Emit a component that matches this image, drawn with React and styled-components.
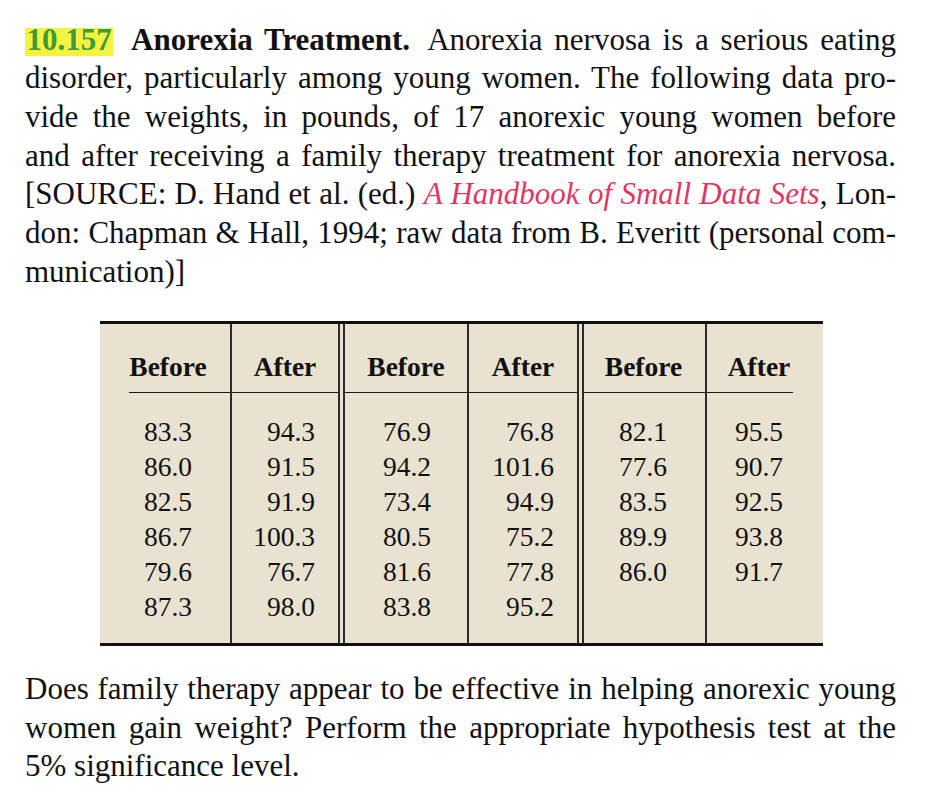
import React from "react";
import styled, { createGlobalStyle } from "styled-components";

const Global = createGlobalStyle`
  html, body { margin: 0; padding: 0; background: #ffffff; }
  body { font-family: "Liberation Serif", "Times New Roman", serif; color: #111; }
`;

const Page = styled.div`
  box-sizing: border-box;
  width: 934px;
  padding: 20.5px 38px 30px 25px;
`;

const Paragraph = styled.div`
  font-size: 31px;
  line-height: 38.7px;
  margin-top: ${(p) => p.$top || 0}px;
`;

const Line = styled.div`
  text-align: justify;
  text-align-last: ${(p) => (p.$last ? "left" : "justify")};
`;

const Number = styled.span`
  font-weight: bold;
  color: #3e9a3c;
  padding: 0 1.5px;
  margin-right: 6px;
  background: linear-gradient(to bottom, transparent 5.5px, #f4f340 5.5px, #f4f340 calc(100% - 0.5px), transparent calc(100% - 0.5px));
`;

const Title = styled.span`
  font-weight: bold;
  margin-right: 7px;
`;

const BookTitle = styled.i`
  color: #e1375f;
`;

const Table = styled.div`
  display: flex;
  width: 723px;
  margin: 29.5px 0 0 75px;
  background: #e9e2d0;
  border-top: 3px solid #111;
  border-bottom: 3px solid #111;
  font-size: 27.5px;
`;

const Column = styled.div`
  box-sizing: border-box;
  width: ${(p) => p.$w}px;
  display: flex;
  flex-direction: column;
  border-right: ${(p) =>
    p.$border === "double"
      ? "7px double #2b2b2b"
      : p.$border === "single"
      ? "2px solid #2b2b2b"
      : "none"};
`;

const HeadCell = styled.div`
  position: relative;
  box-sizing: border-box;
  height: 70px;
  padding: 26px ${(p) => p.$pr || 0}px 0 ${(p) => p.$pl || 0}px;
  line-height: 34px;
  font-weight: bold;
  text-align: center;
  &::after {
    content: "";
    position: absolute;
    left: ${(p) => p.$ls || 0}px;
    right: ${(p) => p.$le || 0}px;
    bottom: 0.5px;
    height: 1.5px;
    background: #1a1a1a;
  }
`;

const Body = styled.div`
  padding: 20px 0 19px;
  flex: 1;
`;

const Cell = styled.div`
  height: 35px;
  line-height: 35px;
  text-align: right;
  padding-right: ${(p) => p.$pr}px;
`;

const columns = [
  { head: "Before", w: 132, border: "single", pr: 38, hpl: 6, hpr: 0, ls: 29, le: 0,
    values: ["83.3", "86.0", "82.5", "86.7", "79.6", "87.3"] },
  { head: "After", w: 113, border: "double", pr: 23, hpl: 0, hpr: 0, ls: 0, le: 0,
    values: ["94.3", "91.5", "91.9", "100.3", "76.7", "98.0"] },
  { head: "Before", w: 124, border: "single", pr: 36, hpl: 0, hpr: 0, ls: 0, le: 0,
    values: ["76.9", "94.2", "73.4", "80.5", "81.6", "83.8"] },
  { head: "After", w: 115, border: "double", pr: 23, hpl: 0, hpr: 0, ls: 0, le: 0,
    values: ["76.8", "101.6", "94.9", "75.2", "77.8", "95.2"] },
  { head: "Before", w: 123, border: "single", pr: 38, hpl: 0, hpr: 2, ls: 0, le: 0,
    values: ["82.1", "77.6", "83.5", "89.9", "86.0", ""] },
  { head: "After", w: 116, border: "none", pr: 40, hpl: 0, hpr: 12, ls: 0, le: 30,
    values: ["95.5", "90.7", "92.5", "93.8", "91.7", ""] },
];

export default function App() {
  return (
    <Page>
      <Global />
      <Paragraph>
        <Line>
          <Number>10.157</Number> <Title>Anorexia Treatment.</Title> Anorexia nervosa is a serious eating
        </Line>
        <Line>disorder, particularly among young women. The following data pro-</Line>
        <Line>vide the weights, in pounds, of 17 anorexic young women before</Line>
        <Line>and after receiving a family therapy treatment for anorexia nervosa.</Line>
        <Line>
          [SOURCE: D. Hand et al. (ed.) <BookTitle>A Handbook of Small Data Sets</BookTitle>, Lon-
        </Line>
        <Line>don: Chapman &amp; Hall, 1994; raw data from B. Everitt (personal com-</Line>
        <Line $last>munication)]</Line>
      </Paragraph>

      <Table>
        {columns.map((c, i) => (
          <Column key={i} $w={c.w} $border={c.border}>
            <HeadCell $pl={c.hpl} $pr={c.hpr} $ls={c.ls} $le={c.le}>
              {c.head}
            </HeadCell>
            <Body>
              {c.values.map((v, j) => (
                <Cell key={j} $pr={c.pr}>
                  {v || "\u00a0"}
                </Cell>
              ))}
            </Body>
          </Column>
        ))}
      </Table>

      <Paragraph $top={24}>
        <Line>Does family therapy appear to be effective in helping anorexic young</Line>
        <Line>women gain weight? Perform the appropriate hypothesis test at the</Line>
        <Line $last>5% significance level.</Line>
      </Paragraph>
    </Page>
  );
}
